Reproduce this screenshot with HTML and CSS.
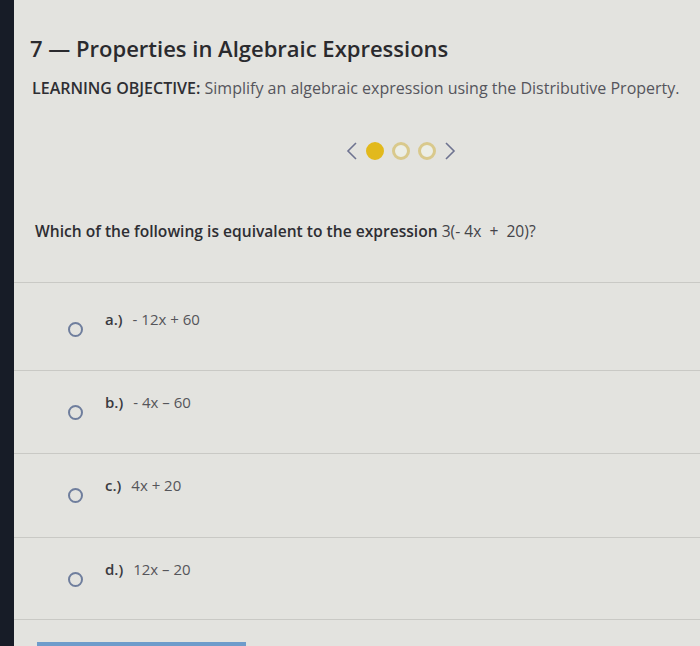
FILE: index.html
```html
<!DOCTYPE html>
<html>
<head>
<meta charset="utf-8">
<link rel="stylesheet" href="styles.css">
</head>
<body>
<div class="screen">
  <div class="bezel"></div>
  <main class="page">
    <header class="head">
      <h1 class="title">7 — Properties in Algebraic Expressions</h1>
      <p class="objective"><span class="obj-label">LEARNING OBJECTIVE:</span> Simplify an algebraic expression using the Distributive Property.</p>
    </header>
    <nav class="pager">
      <svg class="chev" width="12" height="20" viewBox="0 0 12 20"><polyline points="10,2 2,10 10,18" fill="none" stroke="#6e7390" stroke-width="1.6"/></svg>
      <span class="dot dot-on"></span>
      <span class="dot"></span>
      <span class="dot"></span>
      <svg class="chev" width="12" height="20" viewBox="0 0 12 20"><polyline points="2,2 10,10 2,18" fill="none" stroke="#6e7390" stroke-width="1.6"/></svg>
    </nav>
    <p class="question">Which of the following is equivalent to the expression <span class="math">3(- 4x &nbsp;+ &nbsp;20)?</span></p>
    <ul class="options">
      <li class="option"><span class="radio"></span><span class="letter">a.)</span><span class="math">- 12x + 60</span></li>
      <li class="option"><span class="radio"></span><span class="letter">b.)</span><span class="math">- 4x – 60</span></li>
      <li class="option"><span class="radio"></span><span class="letter">c.)</span><span class="math">4x + 20</span></li>
      <li class="option"><span class="radio"></span><span class="letter">d.)</span><span class="math">12x – 20</span></li>
    </ul>
    <div class="footer"><div class="progress"></div></div>
  </main>
</div>
</body>
</html>
```
FILE: styles.css
```css
html, body {
  margin: 0;
  padding: 0;
  height: 100%;
}
body {
  font-family: "Open Sans", "Lato", sans-serif;
  color: #2c2c30;
  background: #e2e2de;
  overflow: hidden;
}
.screen {
  display: flex;
  width: 700px;
  height: 646px;
}
.bezel {
  width: 14px;
  flex: none;
  background: #171c27;
}
.page {
  flex: 1;
  display: flex;
  flex-direction: column;
  background: #e3e3df;
}
.head {
  padding: 35px 0 0 16px;
}
.title {
  margin: 0;
  font-size: 22px;
  line-height: 26px;
  font-weight: 600;
  color: #2a2a2e;
}
.objective {
  margin: 17px 0 0 2px;
  font-size: 16px;
  line-height: 20px;
  color: #55555c;
  white-space: nowrap;
}
.obj-label {
  font-weight: 600;
  color: #2e2e33;
}
.pager {
  margin-top: 43px;
  height: 20px;
  display: flex;
  align-items: center;
  justify-content: center;
  gap: 8px;
  padding-left: 88px;
}
.chev {
  display: block;
}
.dot {
  width: 12px;
  height: 12px;
  border-radius: 50%;
  border: 3px solid #d9c98c;
  background: #eceee6;
}
.dot-on {
  background: #e2b91c;
  border-color: #e2b91c;
}
.question {
  margin: 60px 0 0 21px;
  font-size: 15.6px;
  line-height: 20px;
  font-weight: 600;
  color: #2e2e33;
  white-space: nowrap;
}
.question .math {
  font-weight: 400;
  color: #444449;
}
.options {
  list-style: none;
  margin: 41px 0 0 0;
  padding: 0;
  border-bottom: 1px solid #c9c9c5;
}
.option {
  height: 83px;
  border-top: 1px solid #c9c9c5;
  display: flex;
  align-items: flex-start;
  padding-left: 54px;
  box-sizing: border-box;
  font-size: 15px;
  line-height: 18px;
}
.option:first-child {
  height: 88px;
  padding-top: 5px;
}
.option:nth-child(3) {
  height: 84px;
}
.option:last-child {
  height: 82px;
}
.radio {
  width: 11px;
  height: 11px;
  border-radius: 50%;
  border: 2px solid #6f7e9d;
  margin-top: 34px;
  flex: none;
}
.letter {
  margin: 22px 0 0 22px;
  font-weight: 600;
  color: #3a3a40;
}
.option .math {
  margin: 22px 0 0 10px;
  color: #55555a;
}
.footer {
  flex: 1;
  display: flex;
  align-items: flex-end;
  padding-left: 23px;
}
.progress {
  width: 209px;
  height: 4px;
  background: #6e9ccb;
}
```
